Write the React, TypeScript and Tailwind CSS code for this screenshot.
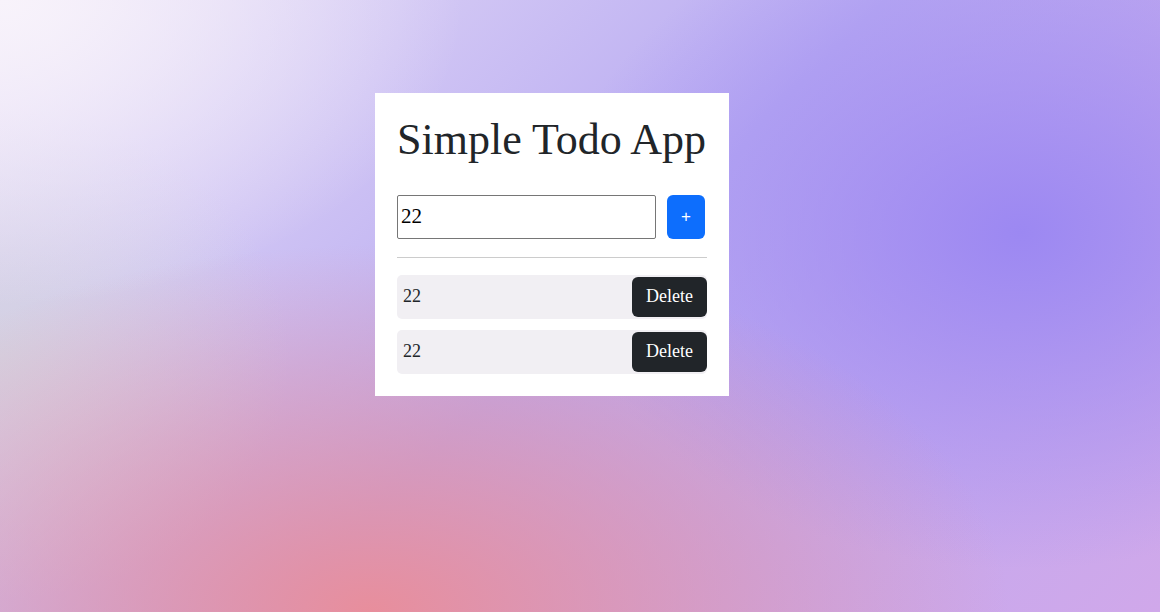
import React from "react";

export default function App() {
  const todos = ["22", "22"];
  return (
    <div className="w-[1160px] h-[612px] flex items-start justify-center pt-[93px] pr-[56px] bg-[radial-gradient(ellipse_55%_60%_at_32%_100%,#e88e9c_0%,rgba(232,142,156,0)_100%),radial-gradient(ellipse_40%_55%_at_88%_38%,#9c88f2_0%,rgba(156,136,242,0)_100%),radial-gradient(ellipse_40%_50%_at_0%_0%,#f8f3fb_0%,rgba(248,243,251,0)_100%),radial-gradient(ellipse_25%_40%_at_0%_58%,#d4d2e2_0%,rgba(212,210,226,0)_100%),linear-gradient(135deg,#eae2f6_0%,#b8aaf2_50%,#d0a8ea_100%)]" style={{ fontFamily: '"Liberation Serif", "Times New Roman", serif' }}>
      <div className="w-[354px] bg-white px-[22px] pt-[22px] pb-[22px] flex flex-col">
        <h1 className="text-[44px] leading-[1.15] text-[#212529]">Simple Todo App</h1>
        <div className="flex gap-[11px] mt-[29px]">
          <input
            defaultValue="22"
            className="w-[259px] h-[44px] border border-[#767676] rounded-[2px] px-[3px] text-[21px] text-black outline-none"
            style={{ fontFamily: '"Liberation Serif", "Times New Roman", serif' }}
          />
          <button className="w-[38px] h-[44px] rounded-[6px] bg-[#0d6efd] text-white text-[17px] flex items-center justify-center" style={{ fontFamily: '"Liberation Sans", Arial, sans-serif' }}>
            +
          </button>
        </div>
        <div className="h-px bg-[#cccccc] mt-[18px] mb-[17px]" />
        <div className="flex flex-col gap-[11px]">
          {todos.map((t, i) => (
            <div key={i} className="h-[44px] bg-[#f1eff3] rounded-[5px] flex items-center justify-between pl-[6px]">
              <span className="text-[18px] text-[#212529]">{t}</span>
              <button className="w-[75px] h-[40px] rounded-[6px] bg-[#212529] text-white text-[18px]">Delete</button>
            </div>
          ))}
        </div>
      </div>
    </div>
  );
}
